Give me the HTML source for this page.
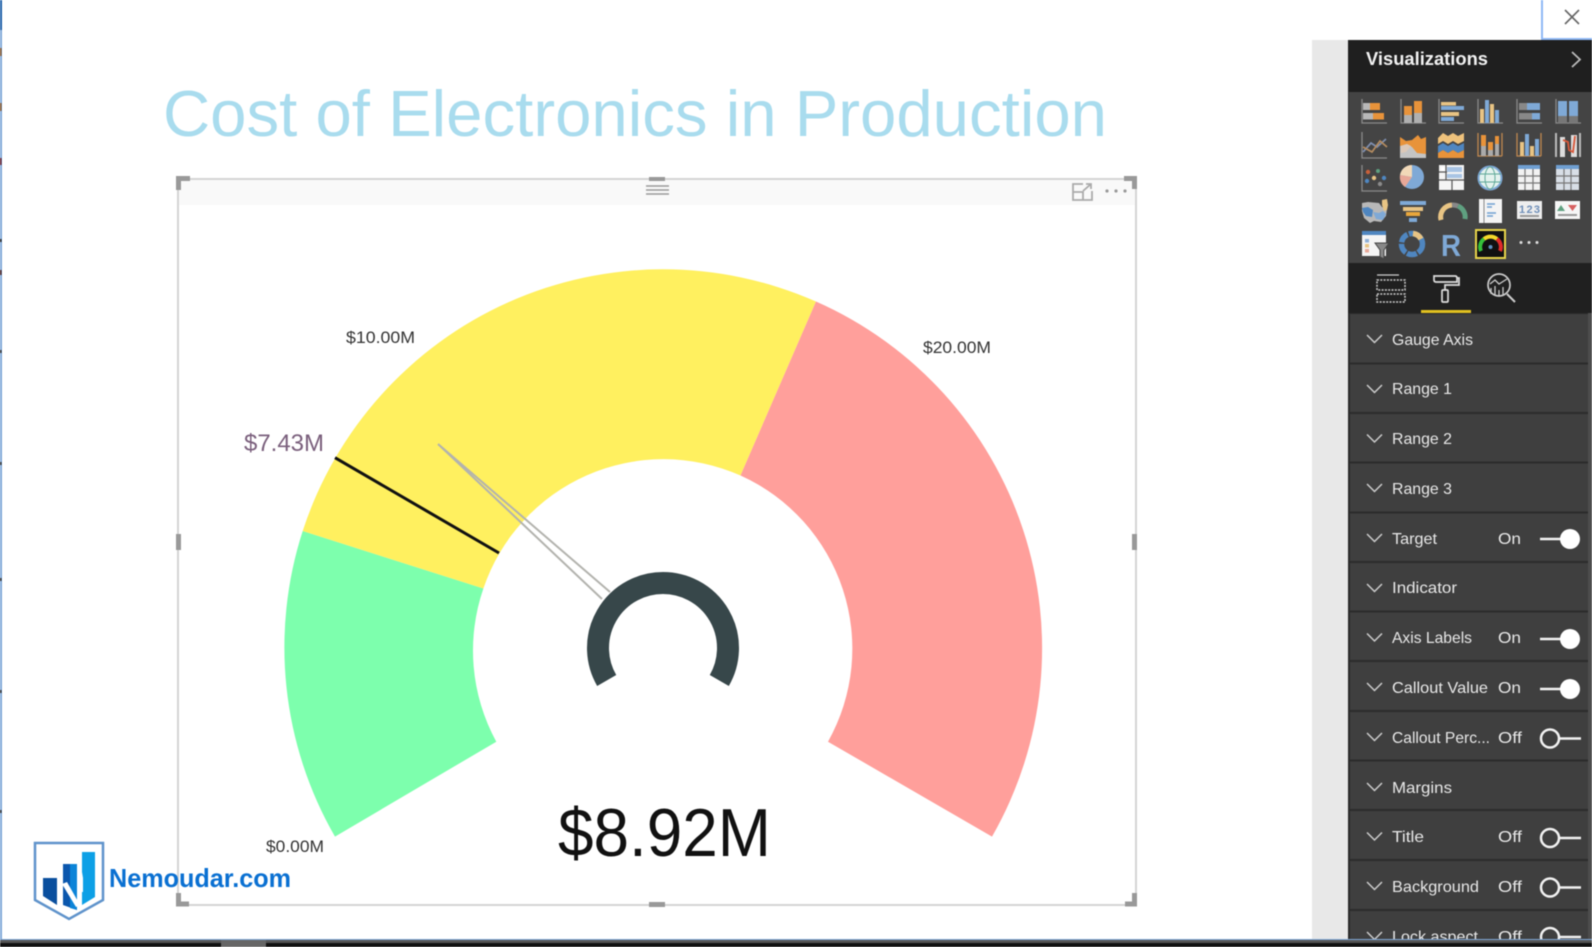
<!DOCTYPE html>
<html><head><meta charset="utf-8"><title>Cost of Electronics in Production</title>
<style>
html,body{margin:0;padding:0;background:#fff;width:1592px;height:947px;overflow:hidden}
svg{display:block;filter:blur(.45px);font-family:"Liberation Sans",sans-serif}
</style></head><body>
<svg width="1592" height="947" viewBox="0 0 1592 947" xmlns="http://www.w3.org/2000/svg">
<rect width="1592" height="947" fill="#fff"/>
<!-- left edge -->
<rect x="0" y="0" width="2" height="939" fill="#7fa8d8"/>
<rect x="0" y="0" width="2" height="30" fill="#1d5fa8"/>
<g fill="#7a4a20"><rect x="0" y="48" width="1.500" height="8"/><rect x="0" y="103" width="1.500" height="8"/><rect x="0" y="158" width="1.500" height="7" fill="#5a1020"/><rect x="0" y="239" width="1.500" height="3" fill="#111"/><rect x="0" y="270" width="1.500" height="5" fill="#3a1010"/><rect x="0" y="350" width="1.500" height="3" fill="#222"/><rect x="0" y="462" width="1.500" height="3" fill="#222"/><rect x="0" y="578" width="1.500" height="3" fill="#222"/><rect x="0" y="690" width="1.500" height="3" fill="#222"/><rect x="0" y="810" width="1.500" height="3" fill="#222"/></g>
<!-- top right -->
<rect x="1541" y="0" width="2" height="40" fill="#8fb8f5"/>
<rect x="1541" y="38" width="51" height="2" fill="#8fb8f5"/>
<path d="M1565 10l14 14M1579 10l-14 14" stroke="#666" stroke-width="1.600" fill="none"/>
<!-- title -->
<text x="163" y="136" font-size="65" fill="#a9dcee" textLength="944" lengthAdjust="spacingAndGlyphs">Cost of Electronics in Production</text>
<!-- visual frame -->
<rect x="179" y="180" width="956" height="25" fill="#f9f9f9"/>
<rect x="178" y="179" width="958" height="726" fill="none" stroke="#d4d4d4" stroke-width="2"/>
<path d="M178.500 190V178.500H190" fill="none" stroke="#999" stroke-width="5"/>
<path d="M1124 178.500H1134.500V189" fill="none" stroke="#999" stroke-width="5"/>
<path d="M178.500 893V904H189" fill="none" stroke="#999" stroke-width="5"/>
<path d="M1125 904H1134.500V893" fill="none" stroke="#999" stroke-width="5"/>
<rect x="176" y="534" width="5" height="16" fill="#999"/>
<rect x="1132" y="534" width="5" height="16" fill="#999"/>
<rect x="649" y="902" width="16" height="5" fill="#999"/>
<rect x="649" y="177" width="16" height="4" fill="#999"/>
<path d="M646 186h23M646 190h23M646 194h23" stroke="#999" stroke-width="1.500"/>
<g fill="none" stroke="#aaa" stroke-width="1.800"><path d="M1083 184h-10v16h19v-9M1073 192h10v8M1083 191l8-7M1086 184h5v5"/></g>
<g fill="#999"><circle cx="1107" cy="191" r="1.600"/><circle cx="1116" cy="191" r="1.600"/><circle cx="1125" cy="191" r="1.600"/></g>
<!-- gauge -->
<path d="M335 836.600A379 379 0 0 1 302.700 531L483.400 588.500A190 190 0 0 0 496.300 741.700Z" fill="#7dffad"/>
<path d="M302.700 531A379 379 0 0 1 816 301.500L740.500 475.500A190 190 0 0 0 483.400 588.500Z" fill="#fff05f"/>
<path d="M816 301.500A379 379 0 0 1 992 836.600L828 741.700A190 190 0 0 0 740.500 475.500Z" fill="#ff9f9b"/>
<path d="M335 457.700L499 553" stroke="#111" stroke-width="3" fill="none"/>
<path d="M438 444L610 592M438 444L602 599" stroke="#b3b3ae" stroke-width="2" fill="none"/>
<path d="M606.700 680.500A65 65 0 1 1 719.300 680.500" fill="none" stroke="#37474a" stroke-width="22"/>
<text x="346" y="343" font-size="17" fill="#333" textLength="69" lengthAdjust="spacingAndGlyphs">$10.00M</text>
<text x="923" y="353" font-size="17" fill="#333" textLength="68" lengthAdjust="spacingAndGlyphs">$20.00M</text>
<text x="266" y="852" font-size="17" fill="#333" textLength="58" lengthAdjust="spacingAndGlyphs">$0.00M</text>
<text x="244" y="451" font-size="24" fill="#7a5f7c" textLength="80" lengthAdjust="spacingAndGlyphs">$7.43M</text>
<text x="558" y="856" font-size="68" fill="#111" textLength="213" lengthAdjust="spacingAndGlyphs">$8.92M</text>
<!-- logo -->
<path d="M35 843H103V900L69 919L35 900Z" fill="#fff" stroke="#5f93cb" stroke-width="2.500"/>
<path d="M43 878H57V905L43 896Z" fill="#0a4f9e"/>
<path d="M63 864H77V910L63 905Z" fill="#0b57ad"/>
<path d="M70 864H77V910L70 908Z" fill="#0c84d8"/>
<path d="M82 852H95V897L82 905Z" fill="#0da0e6"/>
<path d="M62 884L67 882L80 905L76 907Z" fill="#fff"/>
<path d="M80 878L82 872L83 878V892H80Z" fill="#fff"/>
<text x="109" y="887" font-size="26" font-weight="bold" fill="#0a70d2" textLength="182" lengthAdjust="spacingAndGlyphs">Nemoudar.com</text>

<!-- panel -->
<rect x="1312" y="40" width="36" height="907" fill="#e8e8e8"/>
<rect x="1348" y="40" width="244" height="907" fill="#2a2a2a"/>
<rect x="1348" y="40" width="244" height="52" fill="#1f1f1f"/>
<text x="1366" y="65" font-size="18" font-weight="bold" fill="#f2f2f2" textLength="122" lengthAdjust="spacingAndGlyphs">Visualizations</text>
<path d="M1572 52l8 7.500-8 7.500" fill="none" stroke="#bbb" stroke-width="1.800"/>
<rect x="1349" y="92" width="243" height="171" fill="#444"/>
<rect x="1348" y="263" width="244" height="50" fill="#202020"/>

<!-- viz icons axes -->
<g stroke="#8a8a8a" stroke-width="1.300" fill="none">
<path d="M1362 99v24h25M1401 99v24h25M1439 99v24h25M1478 99v24h25M1517 99v24h25M1556 99v24h25"/>
<path d="M1362 132v26h25M1400 156h26"/>
<path d="M1362 165v26h25"/>
</g>
<!-- row 1 -->
<g>
<rect x="1363" y="103" width="7" height="7" fill="#b8b8b8"/><rect x="1370" y="103" width="10" height="7" fill="#e8933a"/>
<rect x="1363" y="113" width="10" height="6.500" fill="#b8b8b8"/><rect x="1373" y="113" width="11" height="6.500" fill="#e8933a"/>
<rect x="1404" y="106" width="8" height="17" fill="#e8933a"/><rect x="1404" y="115" width="8" height="8" fill="#b0b0b0"/>
<rect x="1414" y="101" width="8" height="22" fill="#e8933a"/><rect x="1414" y="113" width="8" height="10" fill="#b0b0b0"/>
<rect x="1441" y="102" width="15" height="3.500" fill="#e8c484"/><rect x="1441" y="106" width="23" height="4" fill="#7fa9d6"/><rect x="1441" y="112" width="18" height="4" fill="#e8c484"/><rect x="1441" y="117" width="13" height="4" fill="#7fa9d6"/>
<rect x="1480" y="109" width="4" height="14" fill="#e8c484"/><rect x="1485" y="100" width="4" height="23" fill="#7fa9d6"/><rect x="1490" y="104" width="4" height="19" fill="#e8c484"/><rect x="1495" y="110" width="4" height="13" fill="#7fa9d6"/>
<rect x="1519" y="103" width="8" height="7" fill="#888"/><rect x="1527" y="103" width="13" height="7" fill="#7fa9d6"/>
<rect x="1519" y="113" width="13" height="6.500" fill="#888"/><rect x="1532" y="113" width="8" height="6.500" fill="#7fa9d6"/>
<rect x="1558" y="101" width="9" height="15" fill="#7fa9d6"/><rect x="1558" y="116" width="9" height="7" fill="#777"/>
<rect x="1569" y="101" width="9" height="15" fill="#7fa9d6"/><rect x="1569" y="116" width="9" height="7" fill="#777"/>
</g>
<!-- row 2 -->
<path d="M1363 152l8-9 6 4 9-8" stroke="#7f8fb0" stroke-width="1.700" fill="none"/>
<path d="M1363 147l9 5 8-11 7 6" stroke="#b58c60" stroke-width="1.700" fill="none"/>
<path d="M1400 137l6 4 6-1 6-5 3 4 5-2v20h-26Z" fill="#e8933a"/><path d="M1400 146l7-2 5 3 5 6 9 1v4h-26Z" fill="#c4c4c4"/><path d="M1401 146l6-2 4 2-5 6-5 1Z" fill="#dcc8b8"/>
<path d="M1438 138l5-5 5 3 5-3 5 3 6-3v8l-6 3-5-3-5 3-5-3-5 3Z" fill="#eec27c"/>
<path d="M1438 146l5-3 5 3 5-3 5 3 6-3v7l-6 3-5-3-5 3-5-3-5 3Z" fill="#4f86c0"/>
<path d="M1438 153l5-3 5 3 5-3 5 3 6-3v8h-26Z" fill="#e8933a"/>
<path d="M1478 133v23h24M1502 133v23" stroke="#c08850" stroke-width="1.300" fill="none"/>
<rect x="1481" y="141" width="5" height="15" fill="#aaa"/><rect x="1481" y="135" width="5" height="11" fill="#e8933a"/><rect x="1488" y="150" width="5" height="6" fill="#aaa"/><rect x="1488" y="142" width="5" height="8" fill="#e8933a"/><rect x="1495" y="136" width="4" height="20" fill="#aaa"/><rect x="1495" y="136" width="4" height="8" fill="#e8933a"/>
<path d="M1517 133v23h24M1541 133v23" stroke="#c08850" stroke-width="1.300" fill="none"/>
<rect x="1520" y="142" width="4" height="14" fill="#e8c484"/><rect x="1525" y="134" width="4" height="22" fill="#7fa9d6"/><rect x="1530" y="146" width="4" height="10" fill="#e8c484"/><rect x="1535" y="139" width="4" height="17" fill="#7fa9d6"/>
<path d="M1556 157v-24M1580 157v-24" stroke="#bbb" stroke-width="2"/>
<path d="M1560 157v-20h5v20ZM1571 157v-22h6v22Z" fill="#ddd"/><path d="M1563 140l5 2 1 8 4 2 2-16" stroke="#d9583a" stroke-width="1.800" fill="none"/>
<!-- row 3 -->
<g><circle cx="1368" cy="172" r="2.200" fill="#c8603a"/><circle cx="1374" cy="178" r="2.200" fill="#e8c484"/><circle cx="1378" cy="171" r="2" fill="#5fa080"/><circle cx="1384" cy="178" r="2.200" fill="#4f86c0"/><circle cx="1367" cy="181" r="2.200" fill="#4f86c0"/><circle cx="1380" cy="184" r="2.200" fill="#8a8a8a"/></g>
<circle cx="1412" cy="177" r="12" fill="#7fa9d6"/><path d="M1412 177V165A12 12 0 0 0 1400 175Z" fill="#f2d9b8"/><path d="M1412 177L1400 175A12 12 0 0 0 1405 187Z" fill="#e8a898"/>
<rect x="1439" y="165" width="25" height="25" fill="#f4f4f4"/><rect x="1447" y="167" width="15" height="5" fill="#a8c4e4"/><rect x="1447" y="174" width="15" height="4" fill="#a8c4e4"/><rect x="1441" y="167" width="4" height="4" fill="#fff"/><path d="M1439 172h8M1446 165v15M1439 180h25M1452 180v10" stroke="#555" stroke-width="1.200"/>
<circle cx="1490" cy="178" r="11.500" fill="#e4f2ee" stroke="#7fa9d6" stroke-width="2"/><ellipse cx="1490" cy="178" rx="5" ry="11" fill="none" stroke="#5fa898" stroke-width="1"/><path d="M1479 174h22M1479 182h22" stroke="#5fa898" stroke-width="1"/>
<rect x="1518" y="166" width="22" height="24" fill="#f2f2f2"/><rect x="1518" y="165" width="22" height="4" fill="#6f9fd2"/><path d="M1525 169v21M1533 169v21M1518 176h22M1518 183h22" stroke="#777" stroke-width="1.200"/>
<rect x="1556" y="166" width="23" height="24" fill="#d8dee6"/><rect x="1556" y="165" width="23" height="4" fill="#6f9fd2"/><path d="M1564 169v21M1571 169v21M1556 176h23M1556 183h23" stroke="#777" stroke-width="1.200"/>
<!-- row 4 -->
<path d="M1362 203l6-1 11 1 3 4 5 2-1 7-5 6-7-1-4 2-6-5-2-7Z" fill="#b8b8b8"/>
<path d="M1362 208l6-1 5 3-1 7-6-1-3-4Z" fill="#4f86c0"/><path d="M1373 212l6 1 4-2 3 3-3 6-7-1Z" fill="#7fa9d6"/>
<path d="M1382 200l5-1 1 6-1 5-3 1-2-6Z" fill="#e8c484"/>
<rect x="1400" y="201" width="26" height="4" fill="#7fa9d6"/><rect x="1403" y="207" width="20" height="4" fill="#e8c484"/><rect x="1406" y="212" width="14" height="4" fill="#e8a63c"/><rect x="1409" y="218" width="8" height="4" fill="#7fa9d6"/>
<path d="M1441 220A12 12 0 0 1 1452 205" stroke="#e8c484" stroke-width="5" fill="none"/><path d="M1452 205A12 12 0 0 1 1458 206" stroke="#888" stroke-width="5" fill="none"/><path d="M1458 206A12 12 0 0 1 1465 219" stroke="#5fa080" stroke-width="5" fill="none"/>
<rect x="1479" y="199" width="23" height="24" fill="#f4f4f4"/><path d="M1484 199v24" stroke="#888"/><path d="M1487 204h8M1487 207h5M1487 213h9M1487 216h6" stroke="#6f9fd2" stroke-width="1.500"/>
<rect x="1517" y="201" width="25" height="18" fill="#eee"/><text x="1519" y="213" font-size="11" font-weight="bold" fill="#6f8fb8" textLength="21">123</text><rect x="1520" y="215" width="19" height="2" fill="#999"/>
<rect x="1555" y="201" width="25" height="18" fill="#f6f6f6"/><path d="M1561 205l4 6h-8Z" fill="#5fa080"/><path d="M1568 205h9l-4.500 6Z" fill="#d65f5f"/><rect x="1558" y="214" width="19" height="2" fill="#999"/>
<!-- row 5 -->
<rect x="1362" y="232" width="24" height="24" fill="#f4f4f4"/><rect x="1362" y="231" width="24" height="4" fill="#4f86c0"/><rect x="1365" y="239" width="4" height="3.500" fill="#8fb0d8"/><rect x="1365" y="244" width="4" height="3.500" fill="#e8c484"/><rect x="1365" y="249" width="4" height="3.500" fill="#e8a898"/>
<path d="M1375 243h14l-5 7v9l-4-2v-7Z" fill="#888" stroke="#444"/>
<circle cx="1412" cy="244" r="10.500" fill="none" stroke="#4f86c0" stroke-width="5.500" stroke-dasharray="10 1.500"/><path d="M1413 233.500A10.500 10.500 0 0 1 1421 239" stroke="#e8c484" stroke-width="5.500" fill="none"/>
<text x="1441" y="256" font-size="31" font-weight="bold" fill="#7fa9d6" textLength="20" lengthAdjust="spacingAndGlyphs">R</text>
<rect x="1476" y="230" width="29" height="28" fill="#111" stroke="#e8d44a" stroke-width="2"/>
<path d="M1481 251A10 10 0 0 1 1484 239" stroke="#35c23a" stroke-width="4" fill="none"/><path d="M1484 239A10 10 0 0 1 1497 239" stroke="#f4d92a" stroke-width="4" fill="none"/><path d="M1497 239A10 10 0 0 1 1500 251" stroke="#e02a2a" stroke-width="4" fill="none"/><circle cx="1490.500" cy="247" r="2" fill="#5f8fc0"/>
<g fill="#ddd"><circle cx="1521" cy="242.500" r="1.500"/><circle cx="1529" cy="242.500" r="1.500"/><circle cx="1537" cy="242.500" r="1.500"/></g>

<!-- tabs -->
<path d="M1377 275h22" stroke="#ccc" stroke-width="1.300"/>
<path d="M1377 280h28v10h-28ZM1377 294h28v8h-28Z" fill="none" stroke="#ccc" stroke-width="1.500" stroke-dasharray="2 1.300"/>
<path d="M1434 276h21q2 0 2 2v4h-21q-2 0-2-2Z M1457 278h2v7h-14v5" fill="none" stroke="#ddd" stroke-width="1.700"/>
<rect x="1442" y="290" width="6" height="12" rx="1" fill="none" stroke="#ddd" stroke-width="1.700"/>
<circle cx="1499" cy="285" r="11" fill="none" stroke="#ccc" stroke-width="1.700"/>
<path d="M1507 294l8 8" stroke="#ccc" stroke-width="2"/>
<path d="M1491 294v-6M1495 295v-9M1499 296v-6M1503 295v-8M1490 284l5-4 4 4 8-5" stroke="#ccc" stroke-width="1.300" fill="none"/>
<rect x="1421" y="310" width="50" height="3" fill="#e0c020"/>

<!-- sections -->
<rect x="1350" y="314" width="238" height="625" fill="#3f3f3f"/>
<rect x="1588" y="313" width="4" height="626" fill="#4d4d4d"/>
<g stroke="#2b2b2b" stroke-width="2">
<path d="M1350 363.500H1588M1350 413H1588M1350 462.500H1588M1350 512.500H1588M1350 562H1588M1350 611.500H1588M1350 661H1588M1350 711H1588M1350 760.500H1588M1350 810H1588M1350 860H1588M1350 910H1588"/>
</g>
<g fill="none" stroke="#ccc" stroke-width="1.500">
<path d="M1367 335l7.500 7.500 7.500-7.500"/><path d="M1367 385l7.500 7.500 7.500-7.500"/><path d="M1367 434.500l7.500 7.500 7.500-7.500"/><path d="M1367 484l7.500 7.500 7.500-7.500"/><path d="M1367 534l7.500 7.500 7.500-7.500"/><path d="M1367 584l7.500 7.500 7.500-7.500"/><path d="M1367 633.500l7.500 7.500 7.500-7.500"/><path d="M1367 683l7.500 7.500 7.500-7.500"/><path d="M1367 733l7.500 7.500 7.500-7.500"/><path d="M1367 783l7.500 7.500 7.500-7.500"/><path d="M1367 832.500l7.500 7.500 7.500-7.500"/><path d="M1367 882l7.500 7.500 7.500-7.500"/><path d="M1367 932l7.500 7.500 7.500-7.500"/>
</g>
<g font-size="16" fill="#e8e8e8">
<text x="1392" y="345" textLength="81" lengthAdjust="spacingAndGlyphs">Gauge Axis</text>
<text x="1392" y="394" textLength="60" lengthAdjust="spacingAndGlyphs">Range 1</text>
<text x="1392" y="444" textLength="60" lengthAdjust="spacingAndGlyphs">Range 2</text>
<text x="1392" y="494" textLength="60" lengthAdjust="spacingAndGlyphs">Range 3</text>
<text x="1392" y="544" textLength="45" lengthAdjust="spacingAndGlyphs">Target</text>
<text x="1392" y="593" textLength="65" lengthAdjust="spacingAndGlyphs">Indicator</text>
<text x="1392" y="643" textLength="80" lengthAdjust="spacingAndGlyphs">Axis Labels</text>
<text x="1392" y="693" textLength="96" lengthAdjust="spacingAndGlyphs">Callout Value</text>
<text x="1392" y="743" textLength="98" lengthAdjust="spacingAndGlyphs">Callout Perc...</text>
<text x="1392" y="793" textLength="60" lengthAdjust="spacingAndGlyphs">Margins</text>
<text x="1392" y="842" textLength="32" lengthAdjust="spacingAndGlyphs">Title</text>
<text x="1392" y="892" textLength="87" lengthAdjust="spacingAndGlyphs">Background</text>
<text x="1392" y="942" textLength="86" lengthAdjust="spacingAndGlyphs">Lock aspect</text>
<text x="1498" y="544" textLength="23" lengthAdjust="spacingAndGlyphs">On</text>
<text x="1498" y="643" textLength="23" lengthAdjust="spacingAndGlyphs">On</text>
<text x="1498" y="693" textLength="23" lengthAdjust="spacingAndGlyphs">On</text>
<text x="1498" y="743" textLength="24" lengthAdjust="spacingAndGlyphs">Off</text>
<text x="1498" y="842" textLength="24" lengthAdjust="spacingAndGlyphs">Off</text>
<text x="1498" y="892" textLength="24" lengthAdjust="spacingAndGlyphs">Off</text>
<text x="1498" y="942" textLength="24" lengthAdjust="spacingAndGlyphs">Off</text>
</g>
<g stroke="#f2f2f2" stroke-width="2.500" fill="#fff">
<path d="M1540 539H1565"/><circle cx="1570" cy="539" r="10" stroke="none"/>
<path d="M1540 639H1565"/><circle cx="1570" cy="639" r="10" stroke="none"/>
<path d="M1540 689H1565"/><circle cx="1570" cy="689" r="10" stroke="none"/>
</g>
<g stroke="#f2f2f2" stroke-width="2.500" fill="none">
<circle cx="1550" cy="738.500" r="9"/><path d="M1559 738.500H1581"/>
<circle cx="1550" cy="838" r="9"/><path d="M1559 838H1581"/>
<circle cx="1550" cy="887.500" r="9"/><path d="M1559 887.500H1581"/>
<circle cx="1550" cy="937" r="9"/><path d="M1559 937H1581"/>
</g>
<!-- bottom bars -->
<rect x="0" y="939" width="1592" height="1.500" fill="#7fa8d8"/>
<rect x="0" y="940" width="1592" height="3" fill="#555"/>
<rect x="0" y="943" width="1592" height="4" fill="#111"/>
<rect x="221" y="940" width="45" height="7" fill="#666"/>
</svg>
</body></html>
